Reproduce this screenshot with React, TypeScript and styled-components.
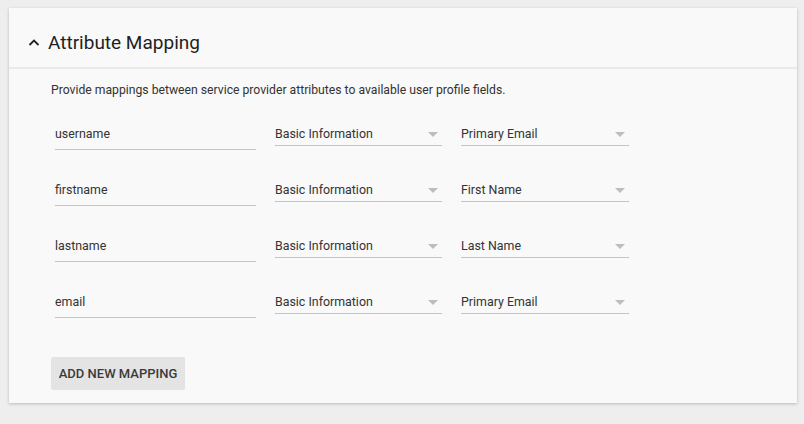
import React from "react";
import styled, { createGlobalStyle } from "styled-components";

const GlobalStyle = createGlobalStyle`
  body {
    margin: 0;
    background: #eeeeee;
    font-family: Roboto, "Liberation Sans", sans-serif;
    color: #333;
  }
`;

const Page = styled.div`
  padding: 8px 7px 0 9px;
  height: 424px;
  box-sizing: border-box;
`;

const Card = styled.section`
  background: #f9f9f9;
  box-shadow: 0 1px 3px rgba(0, 0, 0, 0.22);
  height: 395px;
  box-sizing: border-box;
`;

const Header = styled.div`
  display: flex;
  align-items: center;
  gap: 8px;
  height: 61px;
  box-sizing: border-box;
  padding: 10px 0 0 19px;
  border-bottom: 2px solid #eaeaea;
`;

const Title = styled.h2`
  margin: 0;
  font-size: 19px;
  font-weight: 400;
  color: #1f1f1f;
`;

const Body = styled.div`
  padding: 13px 0 0 42px;
`;

const Description = styled.p`
  margin: 0 0 20px;
  font-size: 12.2px;
  line-height: 16px;
  color: #333;
`;

const Row = styled.div`
  display: grid;
  grid-template-columns: 201px 167px 168px;
  column-gap: 19px;
  align-items: start;
  height: 56px;
  margin-left: 4px;
`;

const TextField = styled.div`
  padding: 8px 0 7px;
  font-size: 12.4px;
  line-height: 16px;
  color: #333;
  border-bottom: 1px solid #c4c4c4;
`;

const Select = styled.div`
  display: flex;
  justify-content: space-between;
  align-items: center;
  padding: 8px 0 3px;
  font-size: 12.4px;
  line-height: 16px;
  color: #333;
  border-bottom: 1px solid #c4c4c4;
`;

const Arrow = styled.span`
  width: 0;
  height: 0;
  margin-right: 4px;
  border-left: 5px solid transparent;
  border-right: 5px solid transparent;
  border-top: 5px solid #bdbdbd;
`;

const Button = styled.button`
  margin-top: 15px;
  width: 134px;
  height: 33px;
  border: none;
  border-radius: 2px;
  background: #e4e4e4;
  font-family: Roboto, "Liberation Sans", sans-serif;
  font-size: 13px;
  font-weight: 500;
  color: #3a3a3a;
  text-transform: uppercase;
  padding: 0;
`;

const mappings = [
  { attr: "username", group: "Basic Information", field: "Primary Email" },
  { attr: "firstname", group: "Basic Information", field: "First Name" },
  { attr: "lastname", group: "Basic Information", field: "Last Name" },
  { attr: "email", group: "Basic Information", field: "Primary Email" },
];

const Chevron = () => (
  <svg width="12" height="12" viewBox="0 0 12 12">
    <path d="M1.5 8 L6 3.5 L10.5 8" fill="none" stroke="#222" strokeWidth="1.8" />
  </svg>
);

export default function App() {
  return (
    <>
      <GlobalStyle />
      <Page>
        <Card>
          <Header>
            <Chevron />
            <Title>Attribute Mapping</Title>
          </Header>
          <Body>
            <Description>
              Provide mappings between service provider attributes to available user profile fields.
            </Description>
            {mappings.map((m, i) => (
              <Row key={i}>
                <TextField>{m.attr}</TextField>
                <Select>
                  {m.group}
                  <Arrow />
                </Select>
                <Select>
                  {m.field}
                  <Arrow />
                </Select>
              </Row>
            ))}
            <Button>Add new mapping</Button>
          </Body>
        </Card>
      </Page>
    </>
  );
}
